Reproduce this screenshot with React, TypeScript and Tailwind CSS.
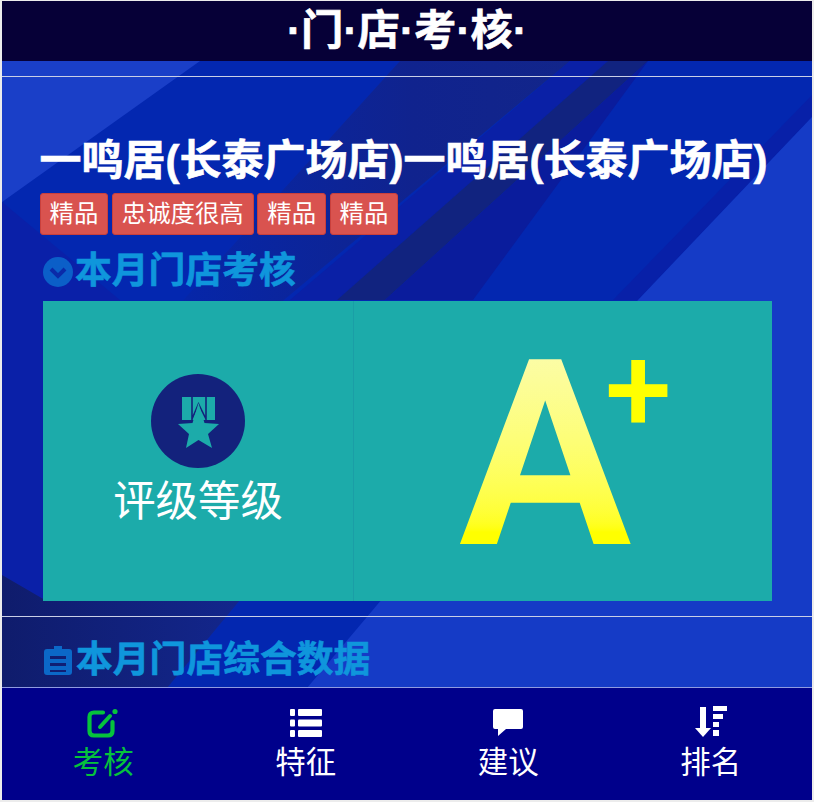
const CJK = { fontFamily: '"Liberation Sans", "Noto Sans CJK SC", sans-serif' }

// ── Diagonal bands behind the page (page coordinates) ────────────────────────
function Backdrop() {
  return (
    <svg className="absolute inset-0 w-full h-full" viewBox="2 1 810 799" preserveAspectRatio="none">
      <defs>
        <linearGradient id="mid" x1="0" y1="0" x2="1" y2="0">
          <stop offset="0" stopColor="#0327b0" />
          <stop offset="0.65" stopColor="#10238e" />
          <stop offset="1" stopColor="#12258a" />
        </linearGradient>
        <linearGradient id="low" x1="0" y1="0" x2="1" y2="0">
          <stop offset="0" stopColor="#0f1c6c" />
          <stop offset="1" stopColor="#13268c" />
        </linearGradient>
      </defs>
      <rect x="2" y="1" width="810" height="799" fill="#0327b0" />
      <polygon points="2,61 200,61 2,202" fill="#1a3fc8" />
      <polygon points="2,202 120,300 43,600 2,600" fill="#0a20a8" />
      <polygon points="400,61 570,61 200,370 120,370" fill="url(#mid)" />
      <polygon points="570,61 608,61 337,300 290,300" fill="#0a20a6" />
      <polygon points="608,61 648,61 385,300 337,300" fill="#11237f" />
      <polygon points="648,61 473,300 385,300" fill="#0a1c9c" />
      <polygon points="812,95 812,117 638,300 613,300" fill="#0820a8" />
      <polygon points="812,117 812,688 307,688 377,605 638,300" fill="#153bc6" />
      <polygon points="2,575 45,600 240,600 167,688 2,688" fill="url(#low)" />
    </svg>
  )
}

function Medal() {
  return (
    <svg width="94" height="94" viewBox="0 0 94 94">
      <circle cx="47" cy="47" r="47" fill="#13227c" />
      <rect x="31" y="23" width="33" height="23" fill="#1cabaa" />
      <path d="M41 22 V46 M55 22 V46 M41 45 L47.5 30 L55 45" fill="none" stroke="#13227c" strokeWidth="1.6" />
      <polygon points="47.5,34 53,50 69,50 56,60 61,75 47.5,66 35,75 39,60 26,50 42,50" fill="#13227c" />
      <polygon points="47.5,29 53.500,49 68,50 57,60 61,74 47.5,66 35,74 38,60 27,50 41.500,49" fill="#1cabaa" />
    </svg>
  )
}

function EditIcon() {
  return (
    <svg width="32" height="30" viewBox="0 0 32 30">
      <path d="M16 4.5 H7 Q2.500 4.500 2.500 9 V23 Q2.500 27.500 7 27.500 H21 Q25.500 27.500 25.500 23 V14" fill="none" stroke="#06c23c" strokeWidth="4.200" strokeLinecap="round" />
      <path d="M13 19 L23 8" fill="none" stroke="#06c23c" strokeWidth="4" strokeLinecap="round" />
      <circle cx="28" cy="3.500" r="2.600" fill="#06c23c" />
    </svg>
  )
}

function ListIcon() {
  return (
    <svg width="32" height="30" viewBox="0 0 32 30" fill="#fff">
      <rect x="0" y="1" width="5" height="7" rx="1" />
      <rect x="8" y="1" width="24" height="7" rx="1" />
      <rect x="0" y="11.500" width="5" height="7" rx="1" />
      <rect x="8" y="11.500" width="24" height="7" rx="1" />
      <rect x="0" y="22" width="5" height="7" rx="1" />
      <rect x="8" y="22" width="24" height="7" rx="1" />
    </svg>
  )
}

function ChatIcon() {
  return (
    <svg width="32" height="30" viewBox="0 0 32 30" fill="#fff">
      <path d="M3 1 H29 Q31 1 31 3 V19 Q31 21 29 21 H14 L6 28 V21 H3 Q1 21 1 19 V3 Q1 1 3 1 Z" />
    </svg>
  )
}

function SortIcon() {
  return (
    <svg width="32" height="32" viewBox="0 0 32 32" fill="#fff">
      <rect x="5" y="1" width="6" height="22" />
      <polygon points="0,22 16,22 8,31" />
      <rect x="18" y="0" width="14" height="5" />
      <rect x="18" y="8" width="10" height="5" />
      <rect x="18" y="16" width="6" height="5" />
      <rect x="18" y="24" width="6" height="6" />
    </svg>
  )
}

function Tag({ text }: { text: string }) {
  return (
    <span className="h-[42px] px-[9px] pt-px flex items-center rounded-[3px] bg-[#d9534f] border border-[#c9403c] text-white text-[24.400px] leading-none">
      {text}
    </span>
  )
}

function Tab({ label, active, children }: { label: string; active?: boolean; children: React.ReactNode }) {
  return (
    <div className={`flex-1 flex flex-col items-center ${active ? 'text-[#06c23c]' : 'text-white'}`}>
      <div className="h-[34px] flex items-end justify-center">{children}</div>
      <span className="mt-[7px] text-[30.400px] leading-[34px]">{label}</span>
    </div>
  )
}

export default function App() {
  const tags = ['精品', '忠诚度很高', '精品', '精品']
  return (
    <div className="h-screen bg-[#ececec] pt-px px-[2px] pb-[2px] overflow-hidden" style={CJK}>
      <div className="relative h-full flex flex-col">
        <Backdrop />

        {/* Header */}
        <div className="relative h-[60px] shrink-0 bg-[#060037] flex items-center justify-center text-white text-[42.400px] font-bold leading-none [-webkit-text-stroke:0.6px_currentColor]">
          ·门·店·考·核·
        </div>

        <div className="relative h-[15px] shrink-0 border-b border-[#c9cfe6] box-content" />

        {/* Store */}
        <div className="relative flex-1 min-h-0 pl-[37.500px]">
          <h1 className="mt-[60px] text-white text-[42px] font-bold leading-[48px] whitespace-nowrap [-webkit-text-stroke:0.6px_currentColor]">
            一鸣居(长泰广场店)一鸣居(长泰广场店)
          </h1>
          <div className="mt-[8px] flex gap-[3.500px]">
            {tags.map((t, i) => <Tag key={i} text={t} />)}
          </div>
          <div className="mt-[14px] ml-[3.500px] flex items-center gap-[2px] h-[43px] pt-[2px]">
            <svg width="30" height="30" viewBox="0 0 30 30">
              <circle cx="15" cy="15" r="15" fill="#0b5fc8" />
              <path d="M8 12 L15 19 L22 12" fill="none" stroke="#0a2aa8" strokeWidth="4" />
            </svg>
            <span className="text-[#0f96dc] text-[36.800px] font-bold leading-none [-webkit-text-stroke:0.6px_currentColor]">本月门店考核</span>
          </div>

          {/* Rating panel */}
          <div className="mt-[9px] ml-[3.500px] w-[729px] h-[300px] bg-[#1cabaa] flex">
            <div className="w-[311px] border-r border-[#1a9ea6] flex flex-col items-center pt-[73px]">
              <Medal />
              <span className="mt-[9px] text-white text-[42.400px] leading-[50px]">评级等级</span>
            </div>
            <div className="flex-1 flex items-start justify-center pl-[4px]">
              <span className="bg-gradient-to-b from-[#fbfbc0] to-[#ffff00] to-[75%] bg-clip-text text-transparent text-[260px] font-semibold leading-[308px]" style={{ fontFamily: 'Roboto, sans-serif' }}>
                A
              </span>
              <span className="mt-[39px] ml-[-27px] text-[#ffff00] text-[120px] font-medium leading-[100px]" style={{ fontFamily: 'Roboto, sans-serif' }}>
                +
              </span>
            </div>
          </div>
        </div>

        {/* Summary heading */}
        <div className="relative h-[71px] shrink-0 border-t border-[#c9cfe6] pl-[41px] pt-[17px] flex items-center gap-[3px]">
          <svg width="30" height="30" viewBox="0 0 30 30">
            <path fillRule="evenodd" fill="#0b68c8" d="M4 3 H26 Q29 3 29 6 V26 Q29 29 26 29 H4 Q1 29 1 26 V6 Q1 3 4 3 Z M7 10 V13 H23 V10 Z M7 17 V20 H23 V17 Z M7 24 V26 H23 V24 Z" />
            <rect x="11" y="0" width="8" height="5" fill="#0b68c8" />
          </svg>
          <span className="text-[#0f96dc] text-[36.800px] font-bold leading-none [-webkit-text-stroke:0.6px_currentColor]">本月门店综合数据</span>
        </div>

        {/* Bottom tabs */}
        <div className="relative h-[113px] shrink-0 border-t border-[#8f9be0] bg-[#00008b] flex pt-[16px]">
          <Tab label="考核" active><EditIcon /></Tab>
          <Tab label="特征"><ListIcon /></Tab>
          <Tab label="建议"><ChatIcon /></Tab>
          <Tab label="排名"><SortIcon /></Tab>
        </div>
      </div>
    </div>
  )
}
